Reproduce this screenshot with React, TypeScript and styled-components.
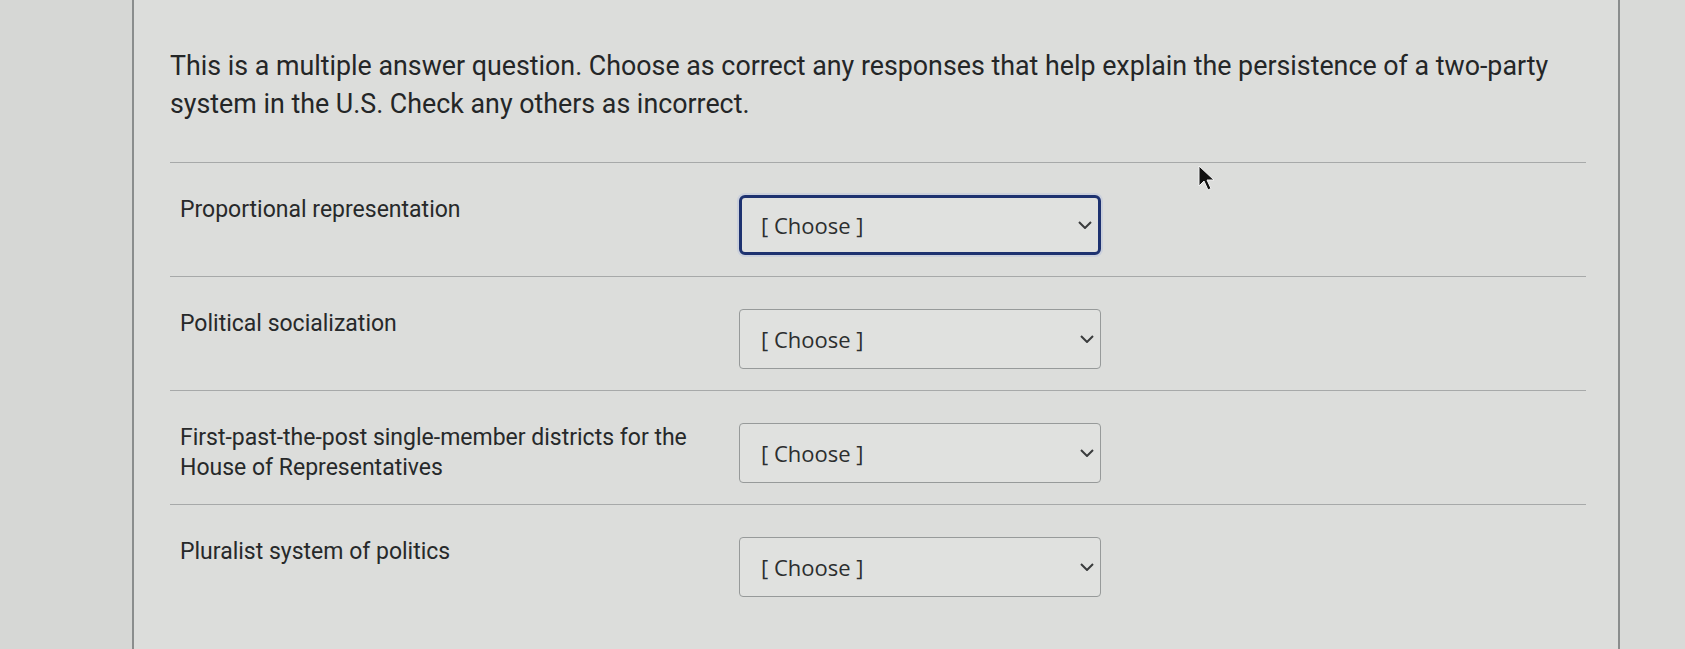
import React from 'react';
import styled, { createGlobalStyle } from 'styled-components';

const GlobalStyle = createGlobalStyle`
  html, body {
    margin: 0;
    padding: 0;
    background: #d9dad8;
    font-family: Roboto, "Liberation Sans", sans-serif;
  }
`;

const Page = styled.div`
  position: relative;
  display: flex;
  width: 1685px;
  height: 649px;
  overflow: hidden;
  background: #d9dad8;
`;

const Gutter = styled.div`
  width: 132px;
  flex-shrink: 0;
  background: #d6d7d5;
`;

const Panel = styled.div`
  width: 1488px;
  flex-shrink: 0;
  box-sizing: border-box;
  padding: 47px 32px 0 36px;
  border-left: 2px solid #8a8d8d;
  border-right: 2px solid #8a8d8d;
  background: #dcdddb;
`;

const Title = styled.p`
  margin: 0 0 39px;
  max-width: 1420px;
  font-size: 26.8px;
  line-height: 38px;
  color: #242627;
`;

const Row = styled.div`
  display: grid;
  grid-template-columns: 559px 362px;
  padding: 32px 0 21px 10px;
  border-top: 1.5px solid #a7a9a9;
`;

const Label = styled.div`
  max-width: 545px;
  font-size: 23px;
  line-height: 30px;
  color: #27292a;
`;

const Select = styled.div<{ $focused?: boolean }>`
  position: relative;
  display: flex;
  align-items: center;
  box-sizing: border-box;
  height: 60px;
  padding-left: ${({ $focused }) => ($focused ? '19px' : '21px')};
  border: ${({ $focused }) => ($focused ? '3px solid #1e3270' : '1.5px solid #979a9a')};
  border-radius: ${({ $focused }) => ($focused ? '6px' : '4px')};
  box-shadow: ${({ $focused }) => ($focused ? '0 0 0 2px #cbd0dc' : 'none')};
  background: #e0e1df;
  font-family: "Open Sans", "Liberation Sans", sans-serif;
  font-size: 22px;
  color: #2c2e2f;
`;

const Chevron = styled.svg`
  position: absolute;
  right: 6px;
  top: 50%;
  width: 14px;
  height: 8px;
  margin-top: -4px;
`;

const Cursor = styled.svg`
  position: absolute;
  left: 1198px;
  top: 165px;
  width: 16px;
  height: 26px;
`;

const rows = [
  { label: 'Proportional representation', focused: true },
  { label: 'Political socialization' },
  { label: 'First-past-the-post single-member districts for the House of Representatives' },
  { label: 'Pluralist system of politics' },
];

export default function App() {
  return (
    <>
      <GlobalStyle />
      <Page>
        <Gutter />
        <Panel>
          <Title>
            This is a multiple answer question. Choose as correct any responses that help explain the
            persistence of a two-party system in the U.S. Check any others as incorrect.
          </Title>
          {rows.map((r) => (
            <Row key={r.label}>
              <Label>{r.label}</Label>
              <Select $focused={r.focused}>
                [ Choose ]
                <Chevron viewBox="0 0 14 8">
                  <path d="M1 1l6 6 6-6" fill="none" stroke="#3a3c3d" strokeWidth="2" />
                </Chevron>
              </Select>
            </Row>
          ))}
        </Panel>
        <Cursor viewBox="0 0 16 26">
          <path d="M1 1v20l5-5 4 9 3-1.5-4-8.5h7z" fill="#111" stroke="#f2f2f2" strokeWidth="1" />
        </Cursor>
      </Page>
    </>
  );
}
